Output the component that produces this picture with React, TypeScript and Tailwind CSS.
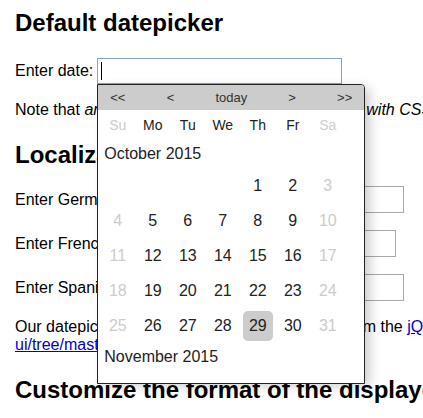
import React from "react";

const WEEK = ["Su", "Mo", "Tu", "We", "Th", "Fr", "Sa"];

type MonthProps = { title: string; start: number; days: number; selected?: number };

function Month({ title, start, days, selected }: MonthProps) {
  const cells: (number | null)[] = [
    ...Array.from({ length: start }, () => null),
    ...Array.from({ length: days }, (_, i) => i + 1),
  ];
  return (
    <div>
      <div className="h-[28px] pl-[6px] flex items-center text-[16px] text-[#222]">{title}</div>
      {days > 0 && (
        <div className="grid grid-cols-7 w-[245px] ml-[2px]">
          {cells.map((d, i) => {
            const weekend = i % 7 === 0 || i % 7 === 6;
            return (
              <div key={i} className="h-[35px] flex items-center justify-center">
                {d !== null && (
                  <span
                    className={
                      "w-[30px] h-[30px] rounded-[5px] flex items-center justify-center text-[16px] " +
                      (d === selected ? "bg-[#cccccc] " : "") +
                      (weekend ? "text-[#cccccc]" : "text-[#222]")
                    }
                  >
                    {d}
                  </span>
                )}
              </div>
            );
          })}
        </div>
      )}
    </div>
  );
}

function Picker() {
  return (
    <div className="absolute left-0 top-[26px] z-10 w-[268px] h-[300px] bg-white border border-[#222] rounded-tr-[4px] overflow-hidden shadow-[6px_3px_12px_-1px_rgba(0,0,0,0.2)]">
      <div className="h-[25px] bg-[#cccccc] px-[12px] flex items-center justify-between text-[13px] text-[#333]">
        <span>&lt;&lt;</span>
        <span>&lt;</span>
        <span>today</span>
        <span>&gt;</span>
        <span>&gt;&gt;</span>
      </div>
      <div className="grid grid-cols-7 w-[245px] ml-[2px] h-[30px] items-center text-[14px]">
        {WEEK.map((w, i) => (
          <span key={w} className={"text-center " + (i === 0 || i === 6 ? "text-[#cccccc]" : "text-[#222]")}>
            {w}
          </span>
        ))}
      </div>
      <Month title="October 2015" start={4} days={31} selected={29} />
      <Month title="November 2015" start={0} days={0} />
    </div>
  );
}

function Field({ label }: { label: string }) {
  return (
    <div className="mt-[17px] flex items-center gap-[4px] h-[27px]">
      <span>{label}</span>
      <input className="w-[244px] h-[27px] border border-[#a9a9a9] bg-white" />
    </div>
  );
}

export default function App() {
  return (
    <div className="w-[423px] h-[418px] overflow-hidden bg-white">
      <div className="w-[900px] pl-[15px] text-[16px] leading-[18px] text-black whitespace-nowrap font-['Liberation_Sans',Arial,sans-serif]">
        <h2 className="mt-[9px] text-[24px] leading-[28px] font-bold">Default datepicker</h2>

        <div className="mt-[21px] flex items-center gap-[4px] h-[26px]">
          <span>Enter date:</span>
          <div className="relative">
            <input className="block w-[245px] h-[26px] border border-[#86a3c2] bg-white outline-none" />
            <span className="absolute left-[4px] top-[4px] w-[1px] h-[18px] bg-black" />
            <Picker />
          </div>
        </div>

        <p className="mt-[17px]">
          Note that <i>an input field with a datepicker is styled with CSS</i> rules of its own.
        </p>

        <h2 className="mt-[22px] text-[24px] leading-[28px] font-bold">Localization</h2>

        <div className="mt-[4px]">
          <Field label="Enter German date:" />
          <Field label="Enter French date:" />
          <Field label="Enter Spanish date:" />
        </div>

        <p className="mt-[17px]">
          Our datepicker localization files were all taken from the{" "}
          <a className="text-[#0000cc] underline">jQuery UI repository: https://github.com/jquery/jquery-</a>
          <br />
          <a className="text-[#0000cc] underline">ui/tree/master/ui/i18n</a>, with a few small fixes.
        </p>

        <h2 className="mt-[22px] text-[24px] leading-[28px] font-bold">Customize the format of the displayed date</h2>
      </div>
    </div>
  );
}
